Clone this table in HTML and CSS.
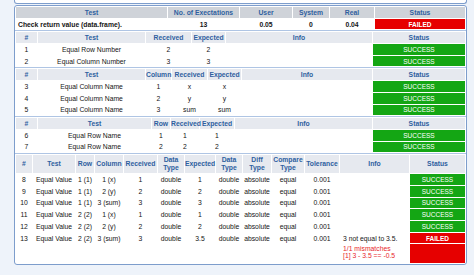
FILE: index.html
```html
<!DOCTYPE html>
<html lang="en">
<head>
  <meta charset="UTF-8">
  <title>Check return value</title>
  <link rel="stylesheet" href="styles.css">
</head>
<body>
  <div class="page">
    <div class="panel-tail"></div>

    <div class="panel">
      <!-- Summary -->
      <table class="grid summary">
        <colgroup>
          <col class="w-test"><col class="w-count"><col class="w-user"><col class="w-system"><col class="w-real"><col>
        </colgroup>
        <tr class="head-main">
          <th>Test</th><th>No. of Exectations</th><th>User</th><th>System</th><th>Real</th><th>Status</th>
        </tr>
        <tr class="summary-row">
          <td class="left">Check return value (data.frame).</td><td>13</td><td>0.05</td><td>0</td><td>0.04</td>
          <td class="status failed">FAILED</td>
        </tr>
      </table>

      <!-- Dimensions -->
      <table class="grid">
        <colgroup>
          <col class="w-num"><col class="w-name"><col class="w-recv"><col class="w-exp"><col class="w-info"><col>
        </colgroup>
        <tr>
          <th>#</th><th>Test</th><th>Received</th><th>Expected</th><th>Info</th><th>Status</th>
        </tr>
        <tr><td>1</td><td>Equal Row Number</td><td>2</td><td>2</td><td></td><td class="status success">SUCCESS</td></tr>
        <tr><td>2</td><td>Equal Column Number</td><td>3</td><td>3</td><td></td><td class="status success">SUCCESS</td></tr>
      </table>

      <!-- Column names -->
      <table class="grid">
        <colgroup>
          <col class="w-num"><col class="w-name"><col class="w-col"><col class="w-recv2"><col class="w-exp"><col class="w-info2"><col>
        </colgroup>
        <tr>
          <th>#</th><th>Test</th><th>Column</th><th>Received</th><th>Expected</th><th>Info</th><th>Status</th>
        </tr>
        <tr><td>3</td><td>Equal Column Name</td><td>1</td><td>x</td><td>x</td><td></td><td class="status success">SUCCESS</td></tr>
        <tr><td>4</td><td>Equal Column Name</td><td>2</td><td>y</td><td>y</td><td></td><td class="status success">SUCCESS</td></tr>
        <tr><td>5</td><td>Equal Column Name</td><td>3</td><td>sum</td><td>sum</td><td></td><td class="status success">SUCCESS</td></tr>
      </table>

      <!-- Row names -->
      <table class="grid">
        <colgroup>
          <col class="w-num"><col class="w-name3"><col class="w-row"><col class="w-recv3"><col class="w-exp3"><col class="w-info3"><col>
        </colgroup>
        <tr>
          <th>#</th><th>Test</th><th>Row</th><th>Received</th><th>Expected</th><th>Info</th><th>Status</th>
        </tr>
        <tr><td>6</td><td>Equal Row Name</td><td>1</td><td>1</td><td>1</td><td></td><td class="status success">SUCCESS</td></tr>
        <tr><td>7</td><td>Equal Row Name</td><td>2</td><td>2</td><td>2</td><td></td><td class="status success">SUCCESS</td></tr>
      </table>

      <!-- Values -->
      <table class="grid values">
        <colgroup>
          <col class="v-num"><col class="v-test"><col class="v-row"><col class="v-col"><col class="v-recv"><col class="v-type">
          <col class="v-exp"><col class="v-type"><col class="v-diff"><col class="v-cmp"><col class="v-tol"><col class="v-info"><col>
        </colgroup>
        <tr class="head-tall">
          <th>#</th><th>Test</th><th>Row</th><th>Column</th><th>Received</th><th>Data<br>Type</th><th>Expected</th>
          <th>Data<br>Type</th><th>Diff<br>Type</th><th>Compare<br>Type</th><th>Tolerance</th><th>Info</th><th>Status</th>
        </tr>
        <tr><td>8</td><td>Equal Value</td><td>1 (1)</td><td>1 (x)</td><td>1</td><td>double</td><td>1</td><td>double</td><td>absolute</td><td>equal</td><td>0.001</td><td class="info"></td><td class="status success">SUCCESS</td></tr>
        <tr><td>9</td><td>Equal Value</td><td>1 (1)</td><td>2 (y)</td><td>2</td><td>double</td><td>2</td><td>double</td><td>absolute</td><td>equal</td><td>0.001</td><td class="info"></td><td class="status success">SUCCESS</td></tr>
        <tr><td>10</td><td>Equal Value</td><td>1 (1)</td><td>3 (sum)</td><td>3</td><td>double</td><td>3</td><td>double</td><td>absolute</td><td>equal</td><td>0.001</td><td class="info"></td><td class="status success">SUCCESS</td></tr>
        <tr><td>11</td><td>Equal Value</td><td>2 (2)</td><td>1 (x)</td><td>1</td><td>double</td><td>1</td><td>double</td><td>absolute</td><td>equal</td><td>0.001</td><td class="info"></td><td class="status success">SUCCESS</td></tr>
        <tr><td>12</td><td>Equal Value</td><td>2 (2)</td><td>2 (y)</td><td>2</td><td>double</td><td>2</td><td>double</td><td>absolute</td><td>equal</td><td>0.001</td><td class="info"></td><td class="status success">SUCCESS</td></tr>
        <tr><td>13</td><td>Equal Value</td><td>2 (2)</td><td>3 (sum)</td><td>3</td><td>double</td><td>3.5</td><td>double</td><td>absolute</td><td>equal</td><td>0.001</td><td class="info">3 not equal to 3.5.</td><td class="status failed">FAILED</td></tr>
        <tr class="note-row">
          <td></td><td></td><td></td><td></td><td></td><td></td><td></td><td></td><td></td><td></td><td></td>
          <td class="info mismatch">1/1 mismatches<br>[1] 3 - 3.5 == -0.5</td>
          <td class="status failed"></td>
        </tr>
      </table>
    </div>
  </div>
</body>
</html>
```

FILE: styles.css
```css
* {
  box-sizing: border-box;
  margin: 0;
  padding: 0;
}

body {
  font-family: "Liberation Sans", Arial, sans-serif;
  font-size: 6.8px;
  background-color: #eef3fa;
  color: #151515;
}

.page {
  padding: 0 7px 0 14px;
}

.panel-tail {
  height: 4px;
  background-color: #fff;
  border: 1px solid #7d9dcc;
  border-top: none;
  border-radius: 0 0 3px 3px;
  margin-bottom: 1px;
}

.panel {
  background-color: #fff;
  border: 1px solid #7d9dcc;
  border-radius: 3px;
}

/* tables */
.grid {
  width: 100%;
  table-layout: fixed;
  border-collapse: separate;
  border-spacing: 1px;
}

.grid + .grid {
  border-top: 1px solid #afc5e4;
}

th, td {
  height: 10.7px;
  padding: 0;
  line-height: 9px;
  text-align: center;
  white-space: nowrap;
  vertical-align: middle;
}

th {
  color: #2f5f9f;
  font-weight: bold;
  background-color: #e6e9ef;
}

.head-main th {
  background-color: #cfd3d9;
}

.head-tall th {
  height: 18px;
  line-height: 8.5px;
}

.summary-row td {
  font-weight: bold;
}

.left {
  text-align: left;
  padding-left: 2px;
}

.status {
  color: #fff;
  font-size: 6.5px;
}

.success {
  background-color: #14a614;
}

.failed {
  background-color: #e60000;
  font-weight: bold;
}

.info {
  text-align: left;
  padding-left: 3px;
}

.note-row td {
  height: 19px;
  vertical-align: top;
}

.mismatch {
  color: #e8262a;
  line-height: 6.8px;
  padding-top: 2px;
}

/* summary columns */
.w-test { width: 151px; }
.w-count { width: 71px; }
.w-user { width: 52px; }
.w-system { width: 36px; }
.w-real { width: 44px; }

/* check columns */
.w-num { width: 21px; }
.w-name { width: 107px; }
.w-recv { width: 45px; }
.w-exp { width: 33px; }
.w-info { width: 146px; }
.w-col { width: 25px; }
.w-recv2 { width: 35px; }
.w-info2 { width: 130px; }
.w-name3 { width: 113px; }
.w-row { width: 18px; }
.w-recv3 { width: 28px; }
.w-exp3 { width: 34px; }
.w-info3 { width: 137px; }

/* value columns */
.v-num { width: 16px; }
.v-test { width: 42px; }
.v-row { width: 18px; }
.v-col { width: 28px; }
.v-recv { width: 33px; }
.v-type { width: 26px; }
.v-exp { width: 30px; }
.v-diff { width: 28px; }
.v-cmp { width: 32px; }
.v-tol { width: 34px; }
.v-info { width: 69px; }
```
